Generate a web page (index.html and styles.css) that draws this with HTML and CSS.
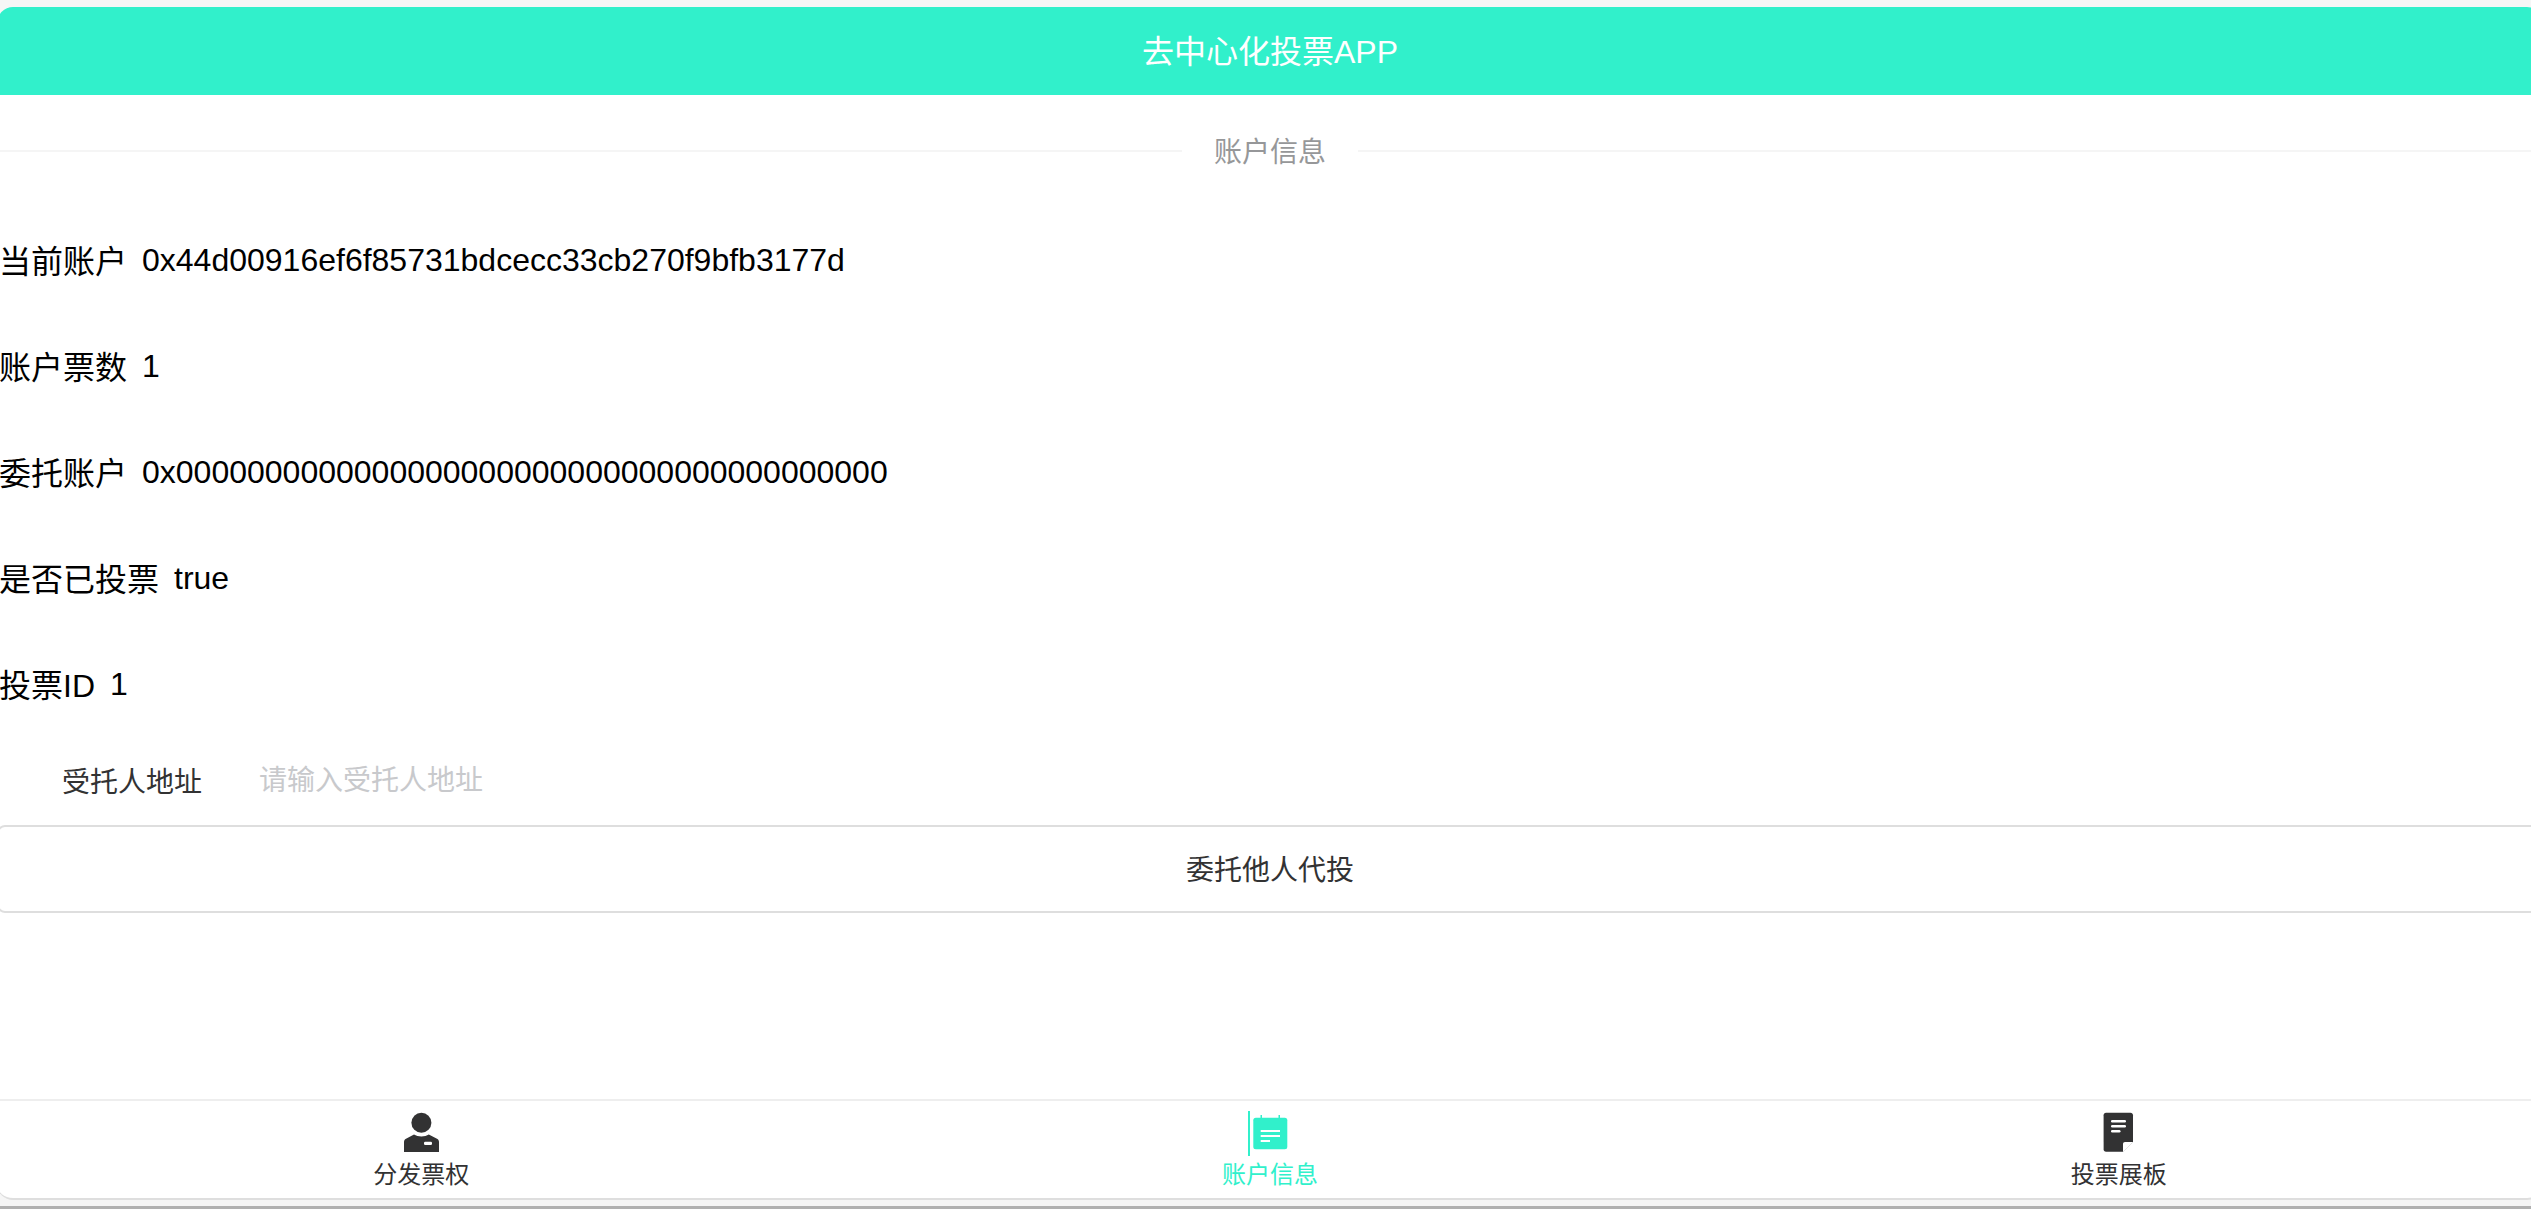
FILE: index.html
```html
<!DOCTYPE html>
<html lang="zh-CN">
<head>
<meta charset="utf-8">
<title>去中心化投票APP</title>
<link rel="stylesheet" href="styles.css">
</head>
<body>
<div class="panel">
  <header class="navbar"><span class="title">去中心化投票APP</span></header>
  <div class="divider"><span class="divider-text">账户信息</span></div>
  <main class="info">
    <p class="row"><span class="key">当前账户</span><span class="val">0x44d00916ef6f85731bdcecc33cb270f9bfb3177d</span></p>
    <p class="row"><span class="key">账户票数</span><span class="val">1</span></p>
    <p class="row"><span class="key">委托账户</span><span class="val">0x0000000000000000000000000000000000000000</span></p>
    <p class="row"><span class="key">是否已投票</span><span class="val">true</span></p>
    <p class="row"><span class="key">投票ID</span><span class="val">1</span></p>
  </main>
  <div class="field">
    <label class="field-label" for="addr">受托人地址</label>
    <input class="field-input" id="addr" placeholder="请输入受托人地址">
  </div>
  <button class="btn" type="button"><span class="lift">委托他人代投</span></button>
  <nav class="tabbar">
    <div class="tab">
      <svg class="icon" width="36" height="40" viewBox="0 0 36 40"><circle cx="18.400" cy="9.700" r="10" fill="#323233"/><path fill="#323233" d="M1 39V29c0-1.500.8-2.700 2-3.200L11 21.500c2 1.300 4.500 2 7.400 2s5.400-.7 7.400-2l8.200 4.300c1.200.5 2 1.700 2 3.200v10z"/><rect x="21" y="28.700" width="8" height="3.300" rx="1.200" fill="#fff"/></svg>
      <span>分发票权</span>
    </div>
    <div class="tab active">
      <span class="icon-wrap">
        <span class="cursor"></span>
        <svg class="icon" width="36" height="40" viewBox="0 0 36 40"><rect x="1.300" y="4.700" width="34" height="31.600" rx="2.500" fill="#31f0cb"/><rect x="8.500" y="2" width="1.500" height="3" fill="#31f0cb"/><rect x="26.500" y="2" width="1.500" height="3" fill="#31f0cb"/><rect x="8.700" y="17" width="19.300" height="2" fill="#fff"/><rect x="8.700" y="22" width="19.300" height="2" fill="#fff"/><rect x="8.700" y="27" width="9.300" height="2" fill="#fff"/></svg>
      </span>
      <span>账户信息</span>
    </div>
    <div class="tab">
      <svg class="icon" width="36" height="40" viewBox="0 0 36 40"><path fill="#323233" d="M5 -.3h24.500c1.400 0 2.500 1.100 2.500 2.500V29L22 38.700H5c-1.400 0-2.400-1-2.400-2.500V2.200C2.600.8 3.600-.3 5-.3z"/><path fill="#fff" d="M32 29v.3L22.300 38.700H22V31c0-1.200.8-2 2-2z"/><rect x="10" y="7" width="15" height="2.500" rx="1.200" fill="#fff"/><rect x="10" y="12" width="15" height="2.500" rx="1.200" fill="#fff"/><rect x="10" y="17" width="9.500" height="2.500" rx="1.200" fill="#fff"/></svg>
      <span>投票展板</span>
    </div>
  </nav>
</div>
<div class="floor"></div>
</body>
</html>
```
FILE: styles.css
```css
* { box-sizing: border-box; }
html, body { margin: 0; height: 100%; overflow: hidden; }
body {
  background: #f6f6f6;
  font-family: "Liberation Sans", "Noto Sans CJK SC", sans-serif;
  color: #000;
  padding-top: 7px;
  display: flex;
  flex-direction: column;
}
.panel {
  width: 2546px;
  height: 1193px;
  margin-left: -3px;
  flex: none;
  background: #fff;
  border-radius: 16px;
  border-bottom: 2px solid #dedede;
  overflow: hidden;
  display: flex;
  flex-direction: column;
}
.navbar {
  height: 88px;
  flex: none;
  background: #31f0cb;
  color: #fff;
  font-size: 32px;
  display: flex;
  align-items: center;
  justify-content: center;
}
.title { display: block; padding-bottom: 5px; }
.lift { display: block; padding-bottom: 3px; }
.divider {
  margin: 32px 0;
  height: 48px;
  flex: none;
  display: flex;
  align-items: center;
  font-size: 28px;
  color: #969799;
}
.divider::before, .divider::after {
  content: "";
  flex: 1;
  height: 2px;
  background: #f5f5f5;
}
.divider-text { padding: 0 32px 3px; }
.info { flex: none; }
.row {
  margin: 0;
  height: 106px;
  font-size: 32px;
  display: flex;
  align-items: center;
}
.key { padding: 0 0 2px 2px; }
.val { margin-left: 15px; }
.field {
  height: 88px;
  flex: none;
  display: flex;
  align-items: center;
  padding-left: 65px;
  font-size: 28px;
  color: #323233;
}
.field-label { width: 197px; flex: none; padding-bottom: 2px; }
.field-input {
  flex: 1;
  border: 0;
  outline: 0;
  padding: 0;
  background: transparent;
  font: inherit;
  color: #323233;
}
.field-input::placeholder { color: #c8c9cc; opacity: 1; }
.btn {
  height: 88px;
  flex: none;
  width: 100%;
  background: #fff;
  border: 2px solid #dedede;
  border-radius: 8px;
  font: inherit;
  font-size: 28px;
  color: #323233;
  padding: 0;
}
.tabbar {
  margin-top: auto;
  height: 99px;
  flex: none;
  border-top: 2px solid #eee;
  display: grid;
  grid-template-columns: repeat(3, 1fr);
}
.tab {
  display: flex;
  flex-direction: column;
  align-items: center;
  padding-top: 12px;
  font-size: 24px;
  line-height: 32px;
  color: #323233;
}
.tab.active { color: #31f0cb; }
.icon { display: block; margin-bottom: 6px; overflow: visible; }
.icon-wrap { position: relative; display: block; }
.cursor {
  position: absolute;
  left: -4px;
  top: -2px;
  width: 2px;
  height: 45px;
  background: #31f0cb;
}
.floor {
  flex: 1;
  background: linear-gradient(#f5f5f5 0 6px, #b0b0b0 6px);
}
```
